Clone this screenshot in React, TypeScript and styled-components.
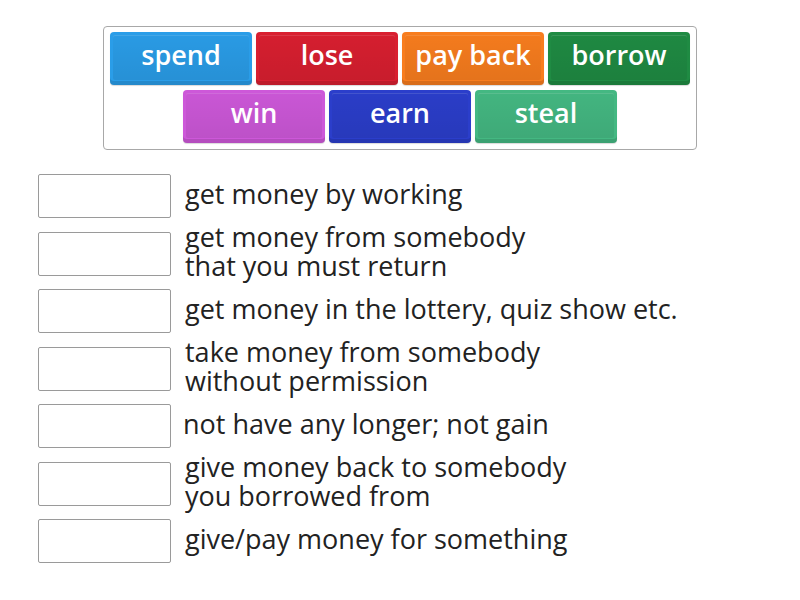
import styled, { createGlobalStyle } from "styled-components";

const GlobalStyle = createGlobalStyle`
  body {
    margin: 0;
    background: #fff;
    font-family: "Open Sans", "Liberation Sans", sans-serif;
  }
`;

const StyledPage = styled.div`
  width: 800px;
  height: 600px;
  padding-top: 26px;
  box-sizing: border-box;
`;

const StyledBank = styled.div`
  width: 594px;
  margin: 0 auto;
  box-sizing: border-box;
  border: 1px solid #a8a8a8;
  border-radius: 4px;
  padding: 5px 6px 6px;
  display: flex;
  flex-wrap: wrap;
  justify-content: center;
  gap: 5px 4px;
`;

type StyledTileProp = {
  color: string;
};

const StyledTile = styled.div<StyledTileProp>`
  position: relative;
  width: 142px;
  height: 53px;
  box-sizing: border-box;
  border-radius: 4px;
  background: ${({ color }) => color};
  color: #fff;
  font-weight: 600;
  font-size: 27px;
  display: flex;
  align-items: center;
  justify-content: center;
  padding-bottom: 8px;
  box-shadow: inset 0 -4px 0 rgba(0, 0, 0, 0.12), 0 1px 1px rgba(0, 0, 0, 0.15);
  &::before {
    content: "";
    position: absolute;
    left: 3px;
    right: 3px;
    top: 3px;
    bottom: 5px;
    border-radius: 2px;
    background: linear-gradient(rgba(0, 0, 0, 0.02), rgba(0, 0, 0, 0.08));
    box-shadow: inset 0 1px 0 rgba(255, 255, 255, 0.12);
  }
  span {
    position: relative;
  }
`;

const StyledList = styled.div`
  display: flex;
  flex-direction: column;
  gap: 13.5px;
  margin: 24px 0 0 38px;
`;

const StyledRow = styled.div`
  display: flex;
  align-items: center;
  height: 44px;
  gap: 14px;
`;

const StyledSlot = styled.div`
  flex: none;
  width: 133px;
  height: 44px;
  box-sizing: border-box;
  border: 1px solid #9a9a9a;
  border-radius: 2px;
  background: #fff;
`;

type StyledTextProp = {
  $shift: number;
};

const StyledText = styled.div<StyledTextProp>`
  font-size: 27px;
  line-height: 29px;
  color: #222;
  white-space: pre-line;
  margin-top: -6px;
  margin-left: ${({ $shift }) => $shift}px;
`;

const tiles = [
  { label: "spend", color: "#2a9de8" },
  { label: "lose", color: "#d91f30" },
  { label: "pay back", color: "#f87d1e" },
  { label: "borrow", color: "#1f8b43" },
  { label: "win", color: "#cd58d9" },
  { label: "earn", color: "#2b3ecb" },
  { label: "steal", color: "#44b882" },
];

const clues = [
  { text: "get money by working", shift: 0 },
  { text: "get money from somebody\nthat you must return", shift: 0 },
  { text: "get money in the lottery, quiz show etc.", shift: 0 },
  { text: "take money from somebody\nwithout permission", shift: 0 },
  { text: "not have any longer; not gain", shift: -2 },
  { text: "give money back to somebody\nyou borrowed from", shift: 0 },
  { text: "give/pay money for something", shift: 0 },
];

export default function App() {
  return (
    <StyledPage>
      <GlobalStyle />
      <StyledBank>
        {tiles.map((t) => (
          <StyledTile key={t.label} color={t.color}>
            <span>{t.label}</span>
          </StyledTile>
        ))}
      </StyledBank>
      <StyledList>
        {clues.map((c) => (
          <StyledRow key={c.text}>
            <StyledSlot />
            <StyledText $shift={c.shift}>{c.text}</StyledText>
          </StyledRow>
        ))}
      </StyledList>
    </StyledPage>
  );
}
